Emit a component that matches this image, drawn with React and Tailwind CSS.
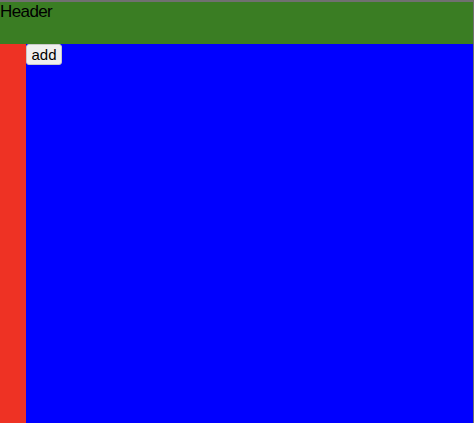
import React from 'react';

const App = () => {
  return (
    <div className="h-[423px] w-[474px] flex flex-col border-t-2 border-r border-[#707070] font-['Liberation_Sans',Arial,sans-serif] text-black">
      <header className="h-[42px] shrink-0 bg-[#3a7d23] text-[17px] leading-[20px] tracking-[-0.6px]">Header</header>
      <div className="flex flex-1">
        <aside className="w-[26px] shrink-0 bg-[#ee3224]"></aside>
        <main className="flex-1 bg-[#0000ff]">
          <button className="block h-[21px] w-[36px] bg-[#efefef] border border-[#c8c8c8] rounded-[3px] text-[15px] leading-none">add</button>
        </main>
      </div>
    </div>
  );
};

export default App;
